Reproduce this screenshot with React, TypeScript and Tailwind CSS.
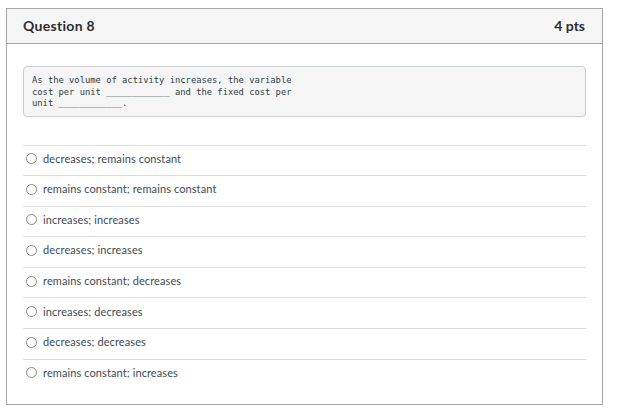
const options = [
  'decreases; remains constant',
  'remains constant; remains constant',
  'increases; increases',
  'decreases; increases',
  'remains constant; decreases',
  'increases; decreases',
  'decreases; decreases',
  'remains constant; increases',
];

export default function App() {
  return (
    <div className="min-h-[419px] w-[617px] bg-white pt-[8px] pl-[6px]" style={{ fontFamily: 'Lato, "Open Sans", sans-serif' }}>
      <div className="w-[597px] border border-[#a6a6a6] bg-white">
        <div className="flex h-[35px] items-center justify-between border-b border-[#a6a6a6] bg-[#f5f5f5] pb-[2px] pl-[16px] pr-[17px]">
          <h2 className="text-[14px] font-bold tracking-[0.3px] text-[#2d2d2d]">Question 8</h2>
          <span className="text-[14px] font-bold text-[#2d2d2d]">4 pts</span>
        </div>
        <div className="px-[16px] pt-[22px] pb-[15px]">
          <div className="rounded-[4px] border border-[#c8cdd1] bg-[#f5f5f5] px-[8px] pt-[8px] pb-[6px]">
            <pre
              className="text-[8.8px] leading-[11.5px] text-[#2d3b45] whitespace-pre"
              style={{ fontFamily: '"DejaVu Sans Mono", "Liberation Mono", monospace' }}
            >
              {'As the volume of activity increases, the variable\ncost per unit ____________ and the fixed cost per\nunit ____________.'}
            </pre>
          </div>
          <div className="mt-[28px]">
            {options.map(opt => (
              <label key={opt} className="flex h-[30.6px] items-center gap-[6px] border-t border-[#dcdcdc] pb-[3px] pl-[3px] text-[11px] tracking-[0.1px] text-[#3d4a55]">
                <input type="radio" name="q8" className="m-0 h-[11px] w-[11px] appearance-none rounded-full border border-[#8a8a8a] bg-white" />
                {opt}
              </label>
            ))}
          </div>
        </div>
      </div>
    </div>
  );
}
